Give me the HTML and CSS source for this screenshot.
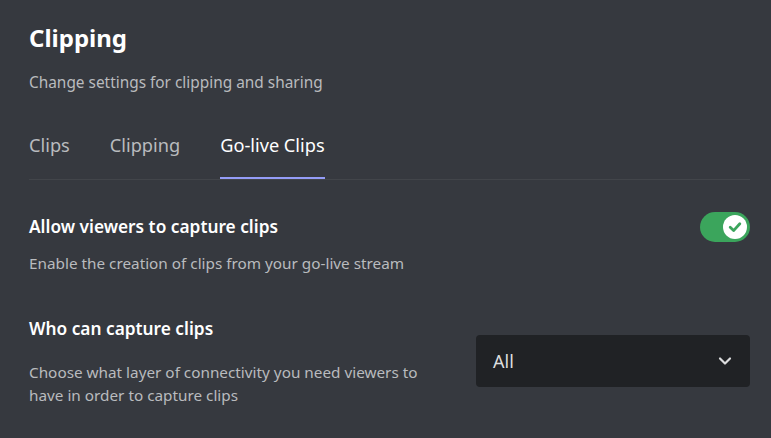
FILE: index.html
```html
<!DOCTYPE html>
<html lang="en">
<head>
<meta charset="utf-8">
<title>Clipping</title>
<link rel="stylesheet" href="styles.css">
</head>
<body>
<main class="page">
  <h1 class="title">Clipping</h1>
  <p class="subtitle">Change settings for clipping and sharing</p>
  <nav class="tabs">
    <span class="tab">Clips</span>
    <span class="tab">Clipping</span>
    <span class="tab active">Go-live Clips</span>
  </nav>
  <section class="row row-toggle">
    <div class="row-text">
      <h2 class="row-title">Allow viewers to capture clips</h2>
      <p class="row-desc">Enable the creation of clips from your go-live stream</p>
    </div>
    <div class="toggle">
      <span class="knob">
        <svg width="24" height="24" viewBox="0 0 24 24"><path d="M7.2 12.3 L10.6 15.6 L16.8 8.8" fill="none" stroke="#3ba55c" stroke-width="2.8" stroke-linecap="round" stroke-linejoin="round"/></svg>
      </span>
    </div>
  </section>
  <section class="row row-select">
    <div class="row-text narrow">
      <h2 class="row-title">Who can capture clips</h2>
      <p class="row-desc">Choose what layer of connectivity you need viewers to have in order to capture clips</p>
    </div>
    <div class="select">
      <span class="select-value">All</span>
      <svg width="18" height="18" viewBox="0 0 18 18"><path d="M4 6.5 L9 11.5 L14 6.5" fill="none" stroke="#dcddde" stroke-width="2.2" stroke-linecap="round" stroke-linejoin="round"/></svg>
    </div>
  </section>
</main>
</body>
</html>
```
FILE: styles.css
```css
html, body {
  margin: 0;
  padding: 0;
  background: #36393f;
}
body {
  font-family: "Noto Sans", "Open Sans", sans-serif;
  color: #dcddde;
}
.page {
  padding: 22px 21px 0 29px;
}
.title {
  margin: 0;
  font-size: 24px;
  line-height: 32px;
  font-weight: 700;
  color: #ffffff;
}
.subtitle {
  margin: 19px 0 0;
  font-size: 15.4px;
  line-height: 20px;
  color: #b9bbbe;
}
.tabs {
  display: flex;
  gap: 40px;
  margin-top: 40px;
  border-bottom: 1px solid #42454a;
}
.tab {
  font-size: 18.2px;
  line-height: 24px;
  color: #b9bbbe;
  padding-bottom: 20px;
  border-bottom: 2px solid transparent;
}
.tab.active {
  color: #ffffff;
  border-bottom-color: #949cf7;
}
.row {
  display: flex;
  justify-content: space-between;
  align-items: flex-start;
}
.row-toggle {
  margin-top: 35px;
}
.row-title {
  margin: 0;
  font-size: 17.3px;
  line-height: 24px;
  font-weight: 600;
  color: #ffffff;
}
.row-desc {
  margin: 13px 0 0;
  font-size: 15.3px;
  line-height: 23px;
  color: #b9bbbe;
}
.toggle {
  width: 50px;
  height: 30px;
  margin-top: -3px;
  border-radius: 15px;
  background: #3ba55c;
  display: flex;
  align-items: center;
  justify-content: flex-end;
  padding: 0 3px;
  box-sizing: border-box;
}
.knob {
  width: 24px;
  height: 24px;
  border-radius: 50%;
  background: #ffffff;
  display: flex;
  align-items: center;
  justify-content: center;
}
.row-select {
  margin-top: 42px;
}
.narrow {
  width: 410px;
}
.row-select .row-desc {
  margin-top: 20px;
}
.select {
  width: 274px;
  height: 52px;
  margin-top: 18px;
  background: #202225;
  border-radius: 4px;
  box-sizing: border-box;
  padding: 0 16px 0 17px;
  display: flex;
  align-items: center;
  justify-content: space-between;
}
.select-value {
  font-size: 18px;
  color: #dcddde;
}
```
